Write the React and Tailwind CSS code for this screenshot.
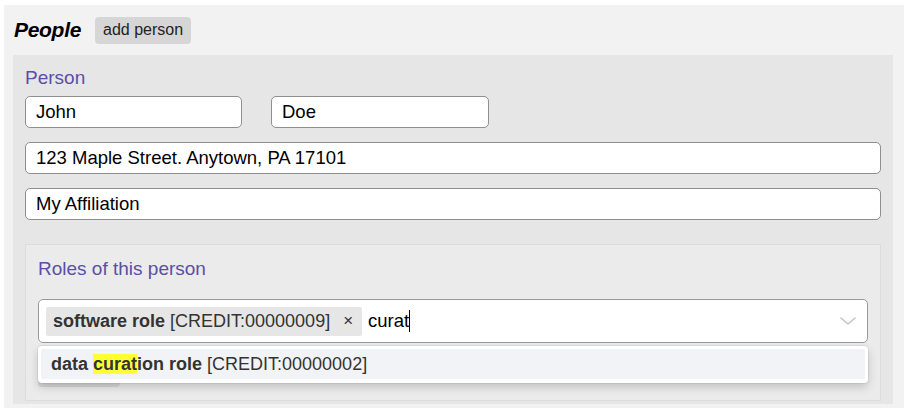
import React from 'react';

const font = { fontFamily: '"Liberation Sans", Arial, sans-serif' };

function TextBox({ value, className = '' }) {
  return (
    <div
      className={`h-[32px] flex items-center px-[10px] bg-white border-[1.5px] border-[#8f8f8f] rounded-[5px] text-[18.5px] text-black ${className}`}
    >
      {value}
    </div>
  );
}

function Chevron() {
  return (
    <svg width="18" height="10" viewBox="0 0 18 10" fill="none">
      <path d="M2 2 L9 8 L16 2" stroke="#c4c4c4" strokeWidth="1.6" strokeLinecap="round" strokeLinejoin="round" />
    </svg>
  );
}

export default function App() {
  return (
    <div className="w-[910px] h-[416px] bg-white pt-[5px] pl-[4px]" style={font}>
      <div className="w-[900px] h-[403px] bg-[#f2f2f2] pt-[11px]">
        {/* header */}
        <div className="flex items-center pl-[10px] h-[28px]">
          <span className="text-[21px] font-bold italic text-black tracking-[-0.3px]">People</span>
          <button className="ml-[14px] h-[27px] px-[8px] rounded-[4px] bg-[#d6d6d6] text-[16px] text-[#222]">
            add person
          </button>
        </div>

        {/* person panel */}
        <div className="relative ml-[9px] mt-[11px] w-[880px] h-[349px] bg-[#e6e6e6] px-[12px] pt-[12px]">
          <div className="text-[19px] leading-[22px] text-[#5b4ea6]">Person</div>
          <div className="flex gap-[29px] mt-[7px]">
            <TextBox value="John" className="w-[217px]" />
            <TextBox value="Doe" className="w-[218px]" />
          </div>
          <TextBox value="123 Maple Street. Anytown, PA 17101" className="mt-[14px]" />
          <TextBox value="My Affiliation" className="mt-[14px]" />

          {/* roles */}
          <div className="mt-[24px] h-[157px] border border-[#dcdcdc] bg-[#ebebeb] px-[12px] pt-[13px]">
            <div className="text-[19px] leading-[22px] text-[#5b4ea6]">Roles of this person</div>
            <div className="mt-[19px] h-[44px] flex items-center bg-white border-[1.5px] border-[#9a9a9a] rounded-[5px] pl-[7px] pr-[10px]">
              <div className="flex items-center h-[29px] bg-[#e6e6e6] rounded-[2px] pl-[7px] pr-[9px] text-[18px] text-[#333]">
                <span className="font-semibold">software role</span>
                <span className="ml-[5px]">[CREDIT:00000009]</span>
                <span className="ml-[13px] text-[17px]">×</span>
              </div>
              <span className="ml-[6px] text-[18.5px] text-black">curat</span>
              <span className="w-px h-[22px] bg-black"></span>
              <div className="ml-auto flex items-center">
                <Chevron />
              </div>
            </div>
            <button className="mt-[12px] h-[32px] w-[82px] rounded-[4px] bg-[#d6d6d6] text-[14px]"></button>
          </div>

          {/* dropdown */}
          <div className="absolute left-[25px] top-[291px] w-[830px] h-[37px] bg-white rounded-[4px] shadow-[0_4px_10px_rgba(0,0,0,0.18),0_0_0_1px_rgba(0,0,0,0.05)] p-[3px]">
            <div className="h-[30px] flex items-center bg-[#f2f3f6] rounded-[2px] pl-[10px] text-[18px] text-[#333]">
              <span className="font-semibold">
                data <span className="bg-[#ffff33]">curat</span>ion role
              </span>
              <span className="ml-[5px]">[CREDIT:00000002]</span>
            </div>
          </div>
        </div>
      </div>
    </div>
  );
}
